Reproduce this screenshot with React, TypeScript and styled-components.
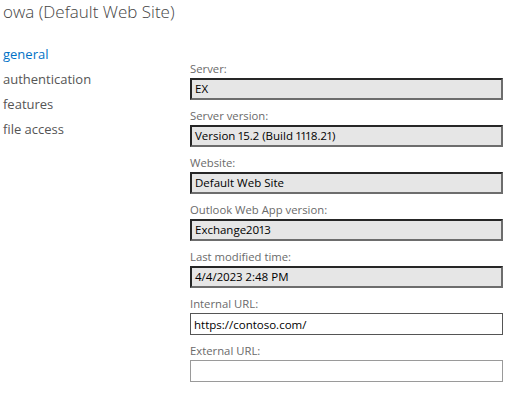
import React from "react";
import styled, { createGlobalStyle } from "styled-components";

const Global = createGlobalStyle`
  html, body { margin: 0; padding: 0; background: #fff; }
  body { font-family: "Open Sans", "Noto Sans", sans-serif; }
`;

const Page = styled.div`
  width: 532px;
  height: 398px;
  overflow: hidden;
`;

const Title = styled.h1`
  margin: 0;
  padding: 1px 0 0 3px;
  height: 39px;
  font-size: 17px;
  font-weight: 300;
  color: #444;
  line-height: 22px;
`;

const Body = styled.div`
  display: grid;
  grid-template-columns: 190px 313px;
`;

const Nav = styled.nav`
  display: flex;
  flex-direction: column;
  padding: 2px 0 0 3px;
`;

const NavItem = styled.a<{ $active?: boolean }>`
  font-size: 13px;
  line-height: 25px;
  color: ${(p) => (p.$active ? "#0072c6" : "#555")};
  text-decoration: none;
`;

const Form = styled.div`
  display: flex;
  flex-direction: column;
  padding-top: 21px;
`;

const Field = styled.div`
  display: flex;
  flex-direction: column;
  height: 47px;
`;

const Label = styled.label`
  font-size: 11.3px;
  line-height: 15px;
  color: #6a6a6a;
  height: 17px;
`;

const ReadOnly = styled.div`
  box-sizing: border-box;
  height: 22px;
  border-style: solid;
  border-width: 2px;
  border-color: #262626 #6d6d6d #6d6d6d #262626;
  background: #e6e6e6;
  font-size: 11.5px;
  line-height: 18px;
  padding: 0 3px;
  color: #000;
  font-variant-numeric: proportional-nums;
`;

const Input = styled.input<{ $strong?: boolean }>`
  box-sizing: border-box;
  display: block;
  width: 100%;
  height: 22px;
  margin: 0;
  border: 1px solid ${(p) => (p.$strong ? "#555" : "#9a9a9a")};
  border-radius: 0;
  background: #fff;
  font-family: "Open Sans", "Noto Sans", sans-serif;
  font-size: 11.5px;
  padding: 0 3px;
  color: #000;
  outline: none;
  font-variant-numeric: proportional-nums;
`;

const readonlyFields = [
  { label: "Server:", value: "EX" },
  { label: "Server version:", value: "Version 15.2 (Build 1118.21)" },
  { label: "Website:", value: "Default Web Site" },
  { label: "Outlook Web App version:", value: "Exchange2013" },
  { label: "Last modified time:", value: "4/4/2023 2:48 PM" },
];

export default function App() {
  return (
    <Page>
      <Global />
      <Title>owa (Default Web Site)</Title>
      <Body>
        <Nav>
          <NavItem $active>general</NavItem>
          <NavItem>authentication</NavItem>
          <NavItem>features</NavItem>
          <NavItem>file access</NavItem>
        </Nav>
        <Form>
          {readonlyFields.map((f) => (
            <Field key={f.label}>
              <Label>{f.label}</Label>
              <ReadOnly>{f.value}</ReadOnly>
            </Field>
          ))}
          <Field>
            <Label>Internal URL:</Label>
            <Input $strong defaultValue="https://contoso.com/" />
          </Field>
          <Field>
            <Label>External URL:</Label>
            <Input defaultValue="" />
          </Field>
        </Form>
      </Body>
    </Page>
  );
}
